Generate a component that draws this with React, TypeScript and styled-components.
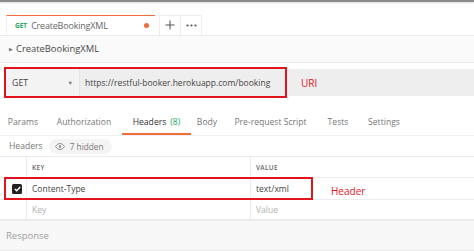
import React from 'react'
import styled, { createGlobalStyle } from 'styled-components'

const GlobalStyle = createGlobalStyle`
  html, body {
    margin: 0;
    padding: 0;
    background: #fff;
  }
  body {
    font-family: 'Open Sans', 'Noto Sans', sans-serif;
    color: #505050;
    width: 474px;
    height: 251px;
    overflow: hidden;
  }
`

const ANNOT = '#e3131c'

const Page = styled.div`
  display: flex;
  flex-direction: column;
  width: 474px;
  height: 251px;
  position: relative;
`

const TopStrip = styled.div`
  height: 2px;
  background: #8c8c8c;
  box-shadow: 0 1px 2px rgba(0, 0, 0, 0.15);
`

const TabBar = styled.div`
  height: 33px;
  display: flex;
  align-items: flex-end;
  padding-left: 6px;
  gap: 4px;
`

const RequestTab = styled.div`
  width: 149px;
  height: 20px;
  box-sizing: border-box;
  border-top: 1.5px solid #f26b3a;
  border-left: 1px solid #eee;
  display: flex;
  align-items: center;
  padding: 0 6px 0 8px;
  font-size: 9px;
  color: #666;
`

const Method = styled.span`
  color: #27a861;
  font-size: 6.5px;
  font-weight: 700;
  margin-right: 4px;
`

const TabName = styled.span`
  flex: 1;
  letter-spacing: -0.2px;
`

const Dot = styled.span`
  width: 5px;
  height: 5px;
  border-radius: 50%;
  background: #f26b3a;
`

const IconGroup = styled.div`
  display: flex;
  height: 20px;
  border: 1px solid #ececec;
  border-bottom: none;
  box-sizing: border-box;
`

const IconButton = styled.div`
  width: 20px;
  display: flex;
  align-items: center;
  justify-content: center;
  color: #555;
  & + & {
    border-left: 1px solid #ececec;
  }
`

const NameBar = styled.div`
  height: 27px;
  background: #fafafa;
  border-top: 1px solid #ececec;
  border-bottom: 1px solid #ececec;
  display: flex;
  align-items: center;
  padding-left: 9px;
  font-size: 9.4px;
  color: #474747;
  gap: 3px;
`

const Caret = styled.span`
  font-size: 5px;
  color: #777;
`

const RequestRow = styled.div`
  margin: 4px 0 0 4px;
  height: 31px;
  display: flex;
  align-items: center;
`

const Boxed = styled.div`
  height: 31px;
  box-sizing: border-box;
  border: 2px solid ${ANNOT};
  display: flex;
  align-items: stretch;
`

const UrlRest = styled.div`
  flex: 1;
  height: 27px;
  background: #eeeeee;
  display: flex;
  align-items: center;
  padding-left: 14px;
`

const Annot = styled.span<{ $size?: number }>`
  color: ${ANNOT};
  font-size: ${(p) => p.$size ?? 10}px;
`

const MethodSelect = styled.div`
  width: 74px;
  background: #f3f3f3;
  display: flex;
  align-items: center;
  justify-content: space-between;
  padding: 0 6px 0 6px;
  box-sizing: border-box;
  font-size: 8.8px;
  color: #444;
  border-right: 1px solid #e4e4e4;
`

const SelectArrow = styled.span`
  font-size: 5.5px;
  color: #777;
`

const UrlField = styled.div`
  width: 205px;
  background: #eeeeee;
  display: flex;
  align-items: center;
  padding-left: 5px;
  box-sizing: border-box;
  font-size: 8.5px;
  color: #444;
  white-space: nowrap;
`

const Tabs = styled.div`
  margin-top: 9px;
  height: 28px;
  display: flex;
  align-items: stretch;
  border-bottom: 1px solid #f0f0f0;
`

const TabItem = styled.div<{ $active?: boolean; $w: number }>`
  width: ${(p) => p.$w}px;
  box-sizing: border-box;
  display: flex;
  align-items: center;
  justify-content: center;
  font-size: 8.6px;
  color: ${(p) => (p.$active ? '#333' : '#777')};
  border-bottom: 2px solid ${(p) => (p.$active ? '#f26b3a' : 'transparent')};
  padding-top: 5px;
  white-space: nowrap;
`

const Count = styled.span`
  color: #27a861;
  margin-left: 4px;
`

const SubHeader = styled.div`
  height: 21px;
  display: flex;
  align-items: center;
  padding-left: 9px;
  gap: 6px;
  font-size: 8.6px;
  color: #777;
`

const HiddenPill = styled.div`
  display: flex;
  align-items: center;
  gap: 5px;
  height: 15px;
  padding: 0 8px 0 6px;
  border-radius: 8px;
  background: #f4f4f4;
  font-size: 8.3px;
  color: #777;
`

const Table = styled.div`
  position: relative;
  border-top: 1px solid #ececec;
`

const Row = styled.div<{ $h: number }>`
  height: ${(p) => p.$h}px;
  display: grid;
  grid-template-columns: 26px 224px 1fr;
  border-bottom: 1px solid #ececec;
  box-sizing: border-box;
`

const Cell = styled.div<{ $tone?: 'head' | 'value' | 'placeholder' }>`
  display: flex;
  align-items: center;
  padding-left: 5px;
  border-left: 1px solid #ececec;
  font-size: ${(p) => (p.$tone === 'head' ? '6.5px' : '8.5px')};
  font-weight: ${(p) => (p.$tone === 'head' ? 600 : 400)};
  letter-spacing: ${(p) => (p.$tone === 'head' ? '0.3px' : '0')};
  color: ${(p) =>
    p.$tone === 'head' ? '#666' : p.$tone === 'placeholder' ? '#b0b0b0' : '#444'};
  &:first-child {
    border-left: none;
    justify-content: center;
    padding-left: 0;
  }
`

const Check = styled.div`
  width: 10px;
  height: 10px;
  border-radius: 1.5px;
  background: #222;
  display: flex;
  align-items: center;
  justify-content: center;
  margin-left: 8px;
`

const RowMark = styled.div`
  position: absolute;
  left: 4px;
  top: 20px;
  width: 309px;
  height: 23px;
  box-sizing: border-box;
  border: 2px solid ${ANNOT};
  pointer-events: none;
`

const HeaderNote = styled(Annot)`
  position: absolute;
  left: 331px;
  top: 27px;
`

const Response = styled.div`
  height: 29px;
  background: #f7f7f7;
  border-top: 1px solid #ececec;
  border-bottom: 1px solid #ececec;
  display: flex;
  align-items: center;
  padding-left: 6px;
  font-size: 9.5px;
  color: #a0a0a0;
`

const Eye = () => (
  <svg width="10" height="7" viewBox="0 0 10 7" fill="none" stroke="#888" strokeWidth="1">
    <path d="M0.6 3.5C2 1.3 3.4 0.6 5 0.6S8 1.3 9.4 3.5C8 5.7 6.6 6.4 5 6.4S2 5.7 0.6 3.5Z" />
    <circle cx="5" cy="3.5" r="1.2" fill="#888" stroke="none" />
  </svg>
)

const tabs = [
  { label: 'Params', w: 46 },
  { label: 'Authorization', w: 76 },
  { label: 'Headers', w: 69, active: true, count: '(8)' },
  { label: 'Body', w: 32 },
  { label: 'Pre-request Script', w: 95 },
  { label: 'Tests', w: 40 },
  { label: 'Settings', w: 52 },
]

export default function App() {
  return (
    <Page>
      <GlobalStyle />
      <TopStrip />
      <TabBar>
        <RequestTab>
          <Method>GET</Method>
          <TabName>CreateBookingXML</TabName>
          <Dot />
        </RequestTab>
        <IconGroup>
          <IconButton>
            <svg width="10" height="10" viewBox="0 0 10 10" stroke="#555" strokeWidth="1.1">
              <path d="M5 0.5V9.5M0.5 5H9.5" />
            </svg>
          </IconButton>
          <IconButton>
            <svg width="11" height="3" viewBox="0 0 11 3" fill="#555">
              <circle cx="1.5" cy="1.5" r="1.1" />
              <circle cx="5.5" cy="1.5" r="1.1" />
              <circle cx="9.5" cy="1.5" r="1.1" />
            </svg>
          </IconButton>
        </IconGroup>
      </TabBar>
      <NameBar>
        <Caret>▶</Caret>
        CreateBookingXML
      </NameBar>
      <RequestRow>
        <Boxed>
          <MethodSelect>
            GET
            <SelectArrow>▼</SelectArrow>
          </MethodSelect>
          <UrlField>https://restful-booker.herokuapp.com/booking</UrlField>
        </Boxed>
        <UrlRest>
          <Annot>URI</Annot>
        </UrlRest>
      </RequestRow>
      <Tabs>
        {tabs.map((t) => (
          <TabItem key={t.label} $w={t.w} $active={t.active}>
            {t.label}
            {t.count && <Count>{t.count}</Count>}
          </TabItem>
        ))}
      </Tabs>
      <SubHeader>
        Headers
        <HiddenPill>
          <Eye />7 hidden
        </HiddenPill>
      </SubHeader>
      <Table>
        <Row $h={21}>
          <Cell />
          <Cell $tone="head">KEY</Cell>
          <Cell $tone="head">VALUE</Cell>
        </Row>
        <Row $h={22}>
          <Cell>
            <Check>
              <svg width="7" height="6" viewBox="0 0 7 6" fill="none" stroke="#fff" strokeWidth="1.4">
                <path d="M0.8 3L2.7 4.8L6.2 1" />
              </svg>
            </Check>
          </Cell>
          <Cell>Content-Type</Cell>
          <Cell>text/xml</Cell>
        </Row>
        <Row $h={20}>
          <Cell />
          <Cell $tone="placeholder">Key</Cell>
          <Cell $tone="placeholder">Value</Cell>
        </Row>
        <RowMark />
        <HeaderNote>Header</HeaderNote>
      </Table>
      <Response>Response</Response>
    </Page>
  )
}
